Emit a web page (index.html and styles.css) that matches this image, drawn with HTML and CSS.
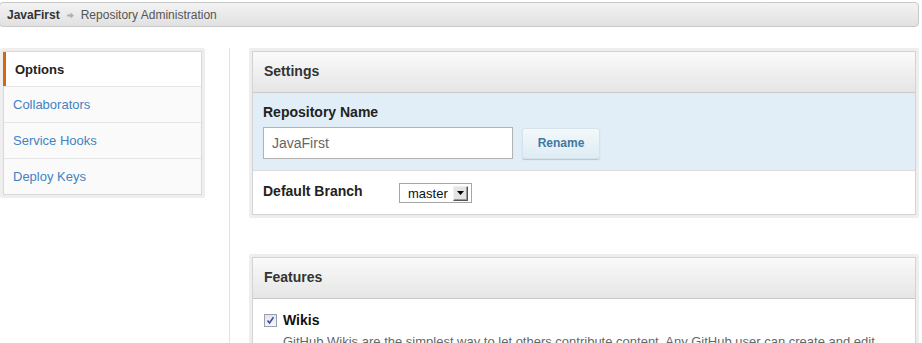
FILE: index.html
```html
<!DOCTYPE html>
<html>
<head>
<meta charset="utf-8">
<link rel="stylesheet" href="styles.css">
</head>
<body>
<div class="page">
  <div class="crumbs">
    <a class="crumb-repo">JavaFirst</a>
    <svg class="crumb-arrow" width="7" height="7" viewBox="0 0 7 7"><path d="M0 2.5h3.5V0.5L7 3.5 3.5 6.5V4.5H0z" fill="#b0b0b0"/></svg>
    <span class="crumb-current">Repository Administration</span>
  </div>

  <div class="main">
    <div class="side">
      <div class="side-frame">
        <ul class="side-menu">
          <li class="side-item active">Options</li>
          <li class="side-item">Collaborators</li>
          <li class="side-item">Service Hooks</li>
          <li class="side-item">Deploy Keys</li>
        </ul>
      </div>
    </div>

    <div class="content">
      <div class="panel">
        <div class="panel-inner">
          <div class="panel-head">Settings</div>
          <div class="row row-blue">
            <div class="label">Repository Name</div>
            <div class="rename-line">
              <div class="text-input">JavaFirst</div>
              <div class="btn">Rename</div>
            </div>
          </div>
          <div class="row row-branch">
            <div class="label branch-label">Default Branch</div>
            <div class="select">
              <span class="select-text">master</span>
              <span class="select-btn"><svg width="7" height="4" viewBox="0 0 7 4"><path d="M0 0h7L3.5 4z" fill="#000"/></svg></span>
            </div>
          </div>
        </div>
      </div>

      <div class="panel features">
        <div class="panel-inner">
          <div class="panel-head">Features</div>
          <div class="feature">
            <div class="feature-title">
              <span class="check"><svg width="9" height="9" viewBox="0 0 9 9"><path d="M1.5 4.5l2 2.5L7.5 1.2" fill="none" stroke="#3a4f9a" stroke-width="1.6"/></svg></span>
              <span class="feature-name">Wikis</span>
            </div>
            <p class="feature-desc">GitHub Wikis are the simplest way to let others contribute content. Any GitHub user can create and edit pages to use for documentation, examples, support or anything you wish.</p>
          </div>
        </div>
      </div>
    </div>
  </div>
</div>
</body>
</html>
```
FILE: styles.css
```css
html, body {
  margin: 0;
  padding: 0;
  background: #fff;
}
body {
  font-family: "Liberation Sans", Arial, sans-serif;
  color: #333;
  overflow: hidden;
}
.page {
  width: 919px;
  padding-top: 2px;
}
.crumbs {
  height: 23px;
  width: 911px;
  border: 1px solid #c9c9c9;
  border-radius: 4px;
  background: linear-gradient(#f3f3f3, #e1e1e1);
  display: flex;
  align-items: center;
  padding-left: 7px;
  font-size: 12px;
  margin-left: -1px;
}
.crumb-repo {
  font-weight: bold;
  color: #333;
}
.crumb-arrow {
  margin: 1px 7px 0 7px;
}
.crumb-current {
  color: #555;
}

.main {
  display: flex;
  margin-top: 21px;
  align-items: stretch;
  min-height: 400px;
}
.side {
  width: 205px;
  flex: none;
}
.side-frame {
  background: #eee;
  padding: 3px;
  border-radius: 2px;
}
.side-menu {
  list-style: none;
  margin: 0;
  padding: 0;
  border: 1px solid #d9d9d9;
}
.side-item {
  height: 35px;
  line-height: 35px;
  font-size: 13px;
  color: #4183c4;
  background: #fafafa;
  border-top: 1px solid #e6e6e6;
  padding-left: 9px;
}
.side-item:first-child {
  border-top: none;
}
.side-item.active {
  background: #fff;
  color: #222;
  font-weight: bold;
  margin-left: -1px;
  border-left: 3px solid #d26911;
  padding-left: 9px;
  height: 34px;
  line-height: 36px;
}
.content {
  flex: 1;
  margin-left: 24px;
  border-left: 1px solid #e3e3e3;
  padding-left: 19px;
}
.panel {
  background: #eee;
  padding: 3px;
  border-radius: 2px;
}
.panel-inner {
  border: 1px solid #d3d3d3;
  background: #fff;
}
.panel-head {
  height: 40px;
  line-height: 38px;
  padding-left: 11px;
  font-size: 14px;
  font-weight: bold;
  background: linear-gradient(#fafafa, #e6e6e6);
  border-bottom: 1px solid #c9c9c9;
}
.row {
  padding-left: 10px;
}
.row-blue {
  background: #e1eef7;
  padding-top: 10px;
  padding-bottom: 11px;
  border-bottom: 1px solid #dcdcdc;
}
.label {
  font-size: 14px;
  font-weight: bold;
  line-height: 18px;
  color: #222;
}
.rename-line {
  display: flex;
  align-items: flex-start;
  margin-top: 6px;
}
.text-input {
  width: 240px;
  height: 30px;
  line-height: 30px;
  border: 1px solid #b3b3b3;
  background: #fff;
  padding-left: 8px;
  font-size: 14px;
  color: #666;
}
.btn {
  margin-left: 9px;
  margin-top: 1px;
  width: 76px;
  height: 29px;
  line-height: 29px;
  text-align: center;
  border: 1px solid #d5e4ec;
  border-radius: 3px;
  background: linear-gradient(#f3f8fb, #dfecf3);
  box-shadow: 0 1px 1px rgba(0,0,0,0.18);
  color: #3d7aa1;
  font-size: 12px;
  font-weight: bold;
}
.row-branch {
  display: flex;
  align-items: flex-start;
  padding-top: 11px;
  padding-bottom: 11px;
}
.branch-label {
  width: 136px;
  flex: none;
}
.select {
  margin-top: 1px;
  width: 71px;
  height: 18px;
  border: 1px solid #a6a6a6;
  display: flex;
  align-items: center;
  justify-content: space-between;
  background: #fff;
}
.select-text {
  font-size: 13px;
  color: #111;
  padding-left: 8px;
}
.select-btn {
  width: 13px;
  height: 13px;
  margin-right: 3px;
  border: 1px solid;
  border-color: #f0f0f0 #555 #555 #f0f0f0;
  box-shadow: inset -1px -1px 0 #999;
  background: #e4e4e4;
  display: flex;
  align-items: center;
  justify-content: center;
}
.features {
  margin-top: 36px;
}
.feature {
  padding: 13px 10px 0 11px;
}
.feature-title {
  display: flex;
  align-items: center;
}
.check {
  width: 11px;
  height: 11px;
  border: 1px solid #9aa0ae;
  background: linear-gradient(#e2e4e8, #f7f7f8);
  display: flex;
  align-items: center;
  justify-content: center;
}
.feature-name {
  margin-left: 6px;
  font-size: 14px;
  font-weight: bold;
  color: #111;
}
.feature-desc {
  margin: 5px 0 0 19px;
  font-size: 13px;
  color: #666;
  line-height: 18px;
}
```
